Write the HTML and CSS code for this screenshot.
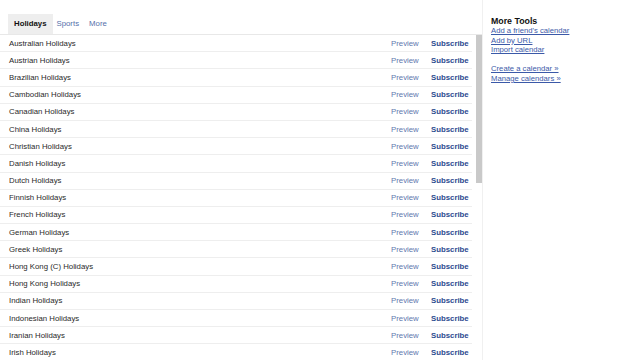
FILE: index.html
```html
<!DOCTYPE html>
<html>
<head>
<meta charset="utf-8">
<link rel="stylesheet" href="styles.css">
</head>
<body>
<div class="page">
  <div class="main">
    <div class="tabs">
      <span class="tab active">Holidays</span>
      <span class="tab sports">Sports</span>
      <span class="tab more">More</span>
    </div>
    <div class="listwrap">
      <ul class="list">
        <li class="row"><span class="name">Australian Holidays</span><a class="preview">Preview</a><a class="sub">Subscribe</a></li>
        <li class="row"><span class="name">Austrian Holidays</span><a class="preview">Preview</a><a class="sub">Subscribe</a></li>
        <li class="row"><span class="name">Brazilian Holidays</span><a class="preview">Preview</a><a class="sub">Subscribe</a></li>
        <li class="row"><span class="name">Cambodian Holidays</span><a class="preview">Preview</a><a class="sub">Subscribe</a></li>
        <li class="row"><span class="name">Canadian Holidays</span><a class="preview">Preview</a><a class="sub">Subscribe</a></li>
        <li class="row"><span class="name">China Holidays</span><a class="preview">Preview</a><a class="sub">Subscribe</a></li>
        <li class="row"><span class="name">Christian Holidays</span><a class="preview">Preview</a><a class="sub">Subscribe</a></li>
        <li class="row"><span class="name">Danish Holidays</span><a class="preview">Preview</a><a class="sub">Subscribe</a></li>
        <li class="row"><span class="name">Dutch Holidays</span><a class="preview">Preview</a><a class="sub">Subscribe</a></li>
        <li class="row"><span class="name">Finnish Holidays</span><a class="preview">Preview</a><a class="sub">Subscribe</a></li>
        <li class="row"><span class="name">French Holidays</span><a class="preview">Preview</a><a class="sub">Subscribe</a></li>
        <li class="row"><span class="name">German Holidays</span><a class="preview">Preview</a><a class="sub">Subscribe</a></li>
        <li class="row"><span class="name">Greek Holidays</span><a class="preview">Preview</a><a class="sub">Subscribe</a></li>
        <li class="row"><span class="name">Hong Kong (C) Holidays</span><a class="preview">Preview</a><a class="sub">Subscribe</a></li>
        <li class="row"><span class="name">Hong Kong Holidays</span><a class="preview">Preview</a><a class="sub">Subscribe</a></li>
        <li class="row"><span class="name">Indian Holidays</span><a class="preview">Preview</a><a class="sub">Subscribe</a></li>
        <li class="row"><span class="name">Indonesian Holidays</span><a class="preview">Preview</a><a class="sub">Subscribe</a></li>
        <li class="row"><span class="name">Iranian Holidays</span><a class="preview">Preview</a><a class="sub">Subscribe</a></li>
        <li class="row"><span class="name">Irish Holidays</span><a class="preview">Preview</a><a class="sub">Subscribe</a></li>
      </ul>
      <div class="track"><div class="thumb"></div></div>
    </div>
  </div>
  <div class="side">
    <div class="side-title">More Tools</div>
    <a class="side-link">Add a friend's calendar</a>
    <a class="side-link">Add by URL</a>
    <a class="side-link">Import calendar</a>
    <div class="side-gap"></div>
    <a class="side-link">Create a calendar »</a>
    <a class="side-link">Manage calendars »</a>
  </div>
</div>
</body>
</html>
```
FILE: styles.css
```css
html, body {
  margin: 0;
  padding: 0;
  background: #fff;
  font-family: "Liberation Sans", Arial, sans-serif;
  color: #222;
  overflow: hidden;
}
.page {
  display: flex;
  width: 640px;
  height: 360px;
}
.main {
  width: 482px;
  border-right: 1px solid #f0f0f0;
  display: flex;
  flex-direction: column;
}
.tabs {
  display: flex;
  align-items: center;
  padding: 14px 0 0 8px;
  height: 20px;
  box-sizing: content-box;
}
.tab {
  font-size: 7.8px;
  line-height: 20px;
  color: #5570aa;
}
.tab.active {
  background: #eeeeee;
  color: #111;
  font-weight: bold;
  padding: 0 6px;
}
.tab.sports { margin-left: 4px; }
.tab.more { margin-left: 10px; }
.listwrap {
  display: flex;
  border-top: 1px solid #e8e8e8;
  flex: 1;
  overflow: hidden;
}
.list {
  list-style: none;
  margin: 0;
  padding: 0;
  width: 472px;
}
.row {
  display: grid;
  grid-template-columns: 382px 40px auto;
  align-items: center;
  height: 17.2px;
  box-sizing: border-box;
  padding-left: 9px;
  border-bottom: 1px solid #eeeeee;
  font-size: 7.8px;
}
.name { color: #2a2a2a; }
.preview { color: #6278ae; }
.sub { color: #2b4a8f; font-weight: bold; }
.track {
  width: 10px;
  display: flex;
  justify-content: flex-end;
}
.thumb {
  width: 6px;
  height: 148px;
  background: #c9c9c9;
}
.side {
  padding: 16px 0 0 8px;
  display: flex;
  flex-direction: column;
  align-items: flex-start;
}
.side-title {
  font-size: 8.8px;
  font-weight: bold;
  color: #111;
  line-height: 10px;
}
.side-link {
  font-size: 7.7px;
  line-height: 9.6px;
  color: #3b59a8;
  text-decoration: underline;
}
.side-gap { height: 9.6px; }
```
